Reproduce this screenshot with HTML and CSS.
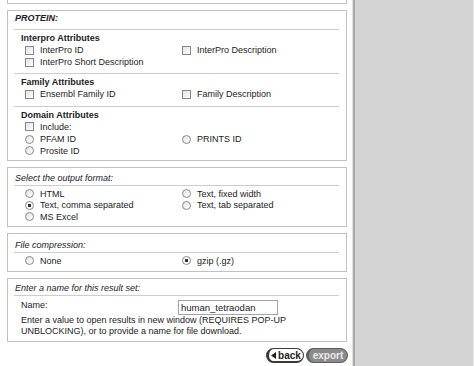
FILE: index.html
```html
<!DOCTYPE html>
<html>
<head>
<meta charset="utf-8">
<link rel="stylesheet" href="styles.css">
</head>
<body>
<div class="main">
  <div class="box box-cut"></div>

  <div class="box">
    <div class="title title-protein">PROTEIN:</div>
    <div class="section s1">
      <div class="heading">Interpro Attributes</div>
      <div class="grid">
        <label class="opt"><input type="checkbox" class="cb">InterPro ID</label>
        <label class="opt"><input type="checkbox" class="cb">InterPro Description</label>
        <label class="opt"><input type="checkbox" class="cb">InterPro Short Description</label>
      </div>
    </div>
    <div class="section s2">
      <div class="heading">Family Attributes</div>
      <div class="grid">
        <label class="opt"><input type="checkbox" class="cb">Ensembl Family ID</label>
        <label class="opt"><input type="checkbox" class="cb">Family Description</label>
      </div>
    </div>
    <div class="section s3 last">
      <div class="heading">Domain Attributes</div>
      <div class="grid">
        <label class="opt opt-include"><input type="checkbox" class="cb">Include:</label>
        <span></span>
        <label class="opt opt-tall"><input type="radio" name="dom" class="rb">PFAM ID</label>
        <label class="opt opt-tall"><input type="radio" name="dom" class="rb">PRINTS ID</label>
        <label class="opt opt-short"><input type="radio" name="dom" class="rb">Prosite ID</label>
      </div>
    </div>
  </div>

  <div class="box">
    <div class="title t3">Select the output format:</div>
    <div class="section plain p3">
      <div class="grid">
        <label class="opt r"><input type="radio" name="fmt" class="rb">HTML</label>
        <label class="opt r"><input type="radio" name="fmt" class="rb">Text, fixed width</label>
        <label class="opt r"><input type="radio" name="fmt" class="rb" checked>Text, comma separated</label>
        <label class="opt r"><input type="radio" name="fmt" class="rb">Text, tab separated</label>
        <label class="opt r"><input type="radio" name="fmt" class="rb">MS Excel</label>
      </div>
    </div>
  </div>

  <div class="box">
    <div class="title t4">File compression:</div>
    <div class="section plain p4">
      <div class="grid">
        <label class="opt r"><input type="radio" name="gz" class="rb">None</label>
        <label class="opt r"><input type="radio" name="gz" class="rb" checked>gzip (.gz)</label>
      </div>
    </div>
  </div>

  <div class="box">
    <div class="title t5">Enter a name for this result set:</div>
    <div class="section plain p5">
      <div class="namerow">
        <span class="namelabel">Name:</span>
        <input class="nameinput" type="text" value="human_tetraodan">
      </div>
      <p class="note">Enter a value to open results in new window (REQUIRES POP-UP<br>UNBLOCKING), or to provide a name for file download.</p>
    </div>
  </div>

  <div class="buttons">
    <span class="btn back"><svg class="tri" width="5" height="7" viewBox="0 0 5 7"><polygon points="5,0 5,7 0,3.5" fill="#222"/></svg>back</span>
    <span class="btn export">export</span>
  </div>
</div>
<div class="side"></div>
</body>
</html>
```
FILE: styles.css
```css
html, body {
  margin: 0;
  padding: 0;
  height: 100%;
}
body {
  display: flex;
  width: 474px;
  height: 366px;
  overflow: hidden;
  font-family: "Liberation Sans", Arial, sans-serif;
  font-size: 9px;
  color: #222;
  background: #fff;
}
.main {
  box-sizing: content-box;
  padding: 0 0 0 7px;
  width: 345px;
  border-right: 1px solid #e2e2e2;
  background: #fff;
}
.side {
  flex: 1;
  background: #d4d4d4;
  border-left: 2px solid #a9a9a9;
  border-right: 1px solid #e6e6e6;
}
.box {
  width: 340px;
  box-sizing: border-box;
  border: 1px solid #c2c2c2;
  padding: 0 7px 0 6px;
  margin-bottom: 6px;
}
.box-cut {
  height: 4px;
  border-top: none;
}
.title {
  font-style: italic;
  padding-left: 1px;
  border-bottom: 1px solid #cdcdcd;
  line-height: 14px;
}
.title-protein {
  font-weight: bold;
  line-height: 15px;
  padding-bottom: 3px;
}
.t3 { padding-top: 3px; }
.t4 { padding-top: 4px; }
.t5 { padding-top: 2px; }
.section {
  border-bottom: 1px solid #cdcdcd;
}
.section.last, .section.plain {
  border-bottom: none;
}
.heading {
  font-weight: bold;
  padding-left: 7px;
  line-height: 11px;
}
.s1 { padding: 3px 0 5px; }
.s2 { padding: 3px 0 6px; }
.s3 { padding: 3px 0 4px; }
.grid {
  display: grid;
  grid-template-columns: 157px 1fr;
  padding-left: 11px;
}
.opt {
  display: flex;
  align-items: center;
  height: 12px;
  white-space: nowrap;
}
.opt-include { height: 11px; }
.opt-tall { height: 12px; margin-top: 1px; }
.opt-short { height: 11px; }
.opt.r { height: 11.5px; }
.cb, .rb {
  -webkit-appearance: none;
  appearance: none;
  margin: 0 6px 0 0;
  box-sizing: border-box;
  width: 9px;
  height: 9px;
  flex: none;
  background: linear-gradient(135deg, #e2e2e2, #fff);
}
.cb {
  border: 1px solid #888;
}
.rb {
  border: 1px solid #888;
  border-radius: 50%;
}
.rb:checked {
  background: radial-gradient(circle, #333 0, #333 1.4px, #fff 2px);
}
.p3 { padding: 2px 0 3.5px; }
.p4 { padding: 2px 0 4.5px; }
.p5 { padding: 4px 0 4px 7px; }
.namerow {
  display: flex;
  align-items: flex-start;
}
.namelabel {
  width: 157px;
  line-height: 11px;
}
.nameinput {
  width: 100px;
  height: 15px;
  box-sizing: border-box;
  border: 1px solid #a4a4a4;
  padding: 0 2px;
  margin: 0;
  font-family: "Liberation Sans", Arial, sans-serif;
  font-size: 9.5px;
  color: #222;
  outline: none;
}
.note {
  margin: 0;
  line-height: 11px;
}
.buttons {
  display: flex;
  justify-content: flex-end;
  gap: 2px;
  width: 341px;
}
.btn {
  display: flex;
  align-items: center;
  justify-content: center;
  height: 15px;
  box-sizing: border-box;
  border-radius: 8px;
  font-weight: bold;
  font-size: 10px;
}
.back {
  width: 38px;
  background: #fff;
  color: #222;
  border: 1px solid #3a3a3a;
  border-left-width: 3px;
  border-bottom-width: 2px;
}
.tri {
  margin-right: 2px;
}
.export {
  width: 42px;
  background: #8b8b8b;
  color: #ececec;
  border: 1px solid #5e5e5e;
  border-left-width: 3px;
}
```
